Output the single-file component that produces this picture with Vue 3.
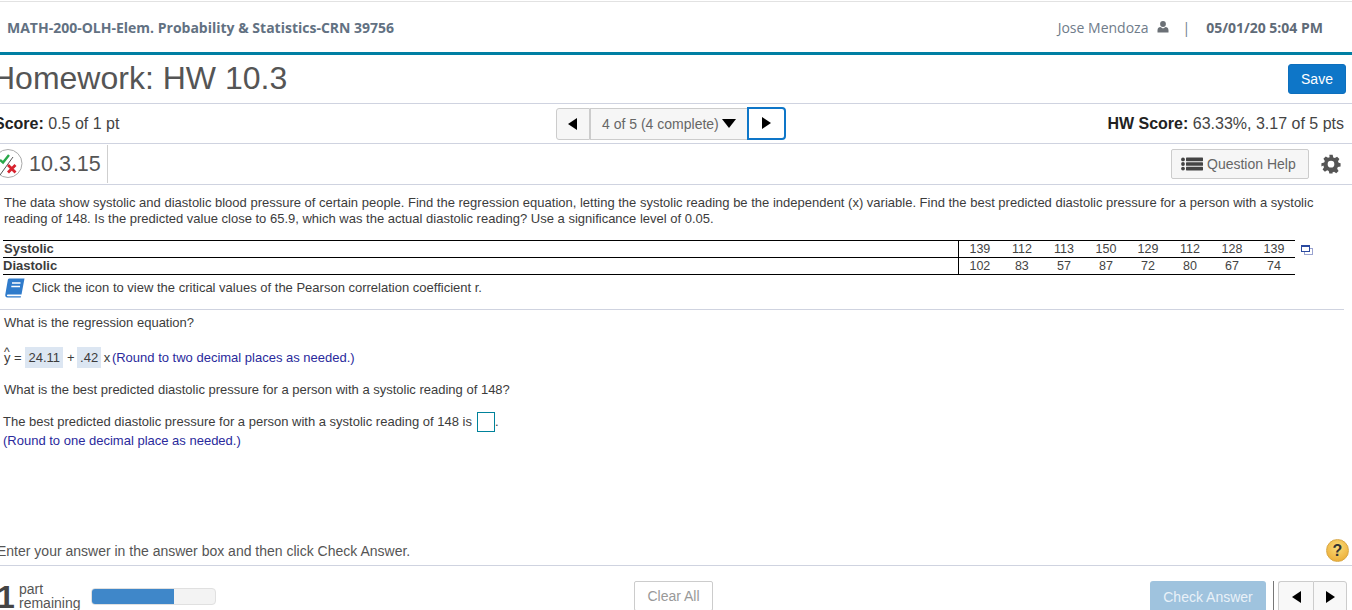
<script setup>
const systolic = [139, 112, 113, 150, 129, 112, 128, 139]
const diastolic = [102, 83, 57, 87, 72, 80, 67, 74]
</script>

<template>
  <div class="page">
    <header class="course">
      <span class="course-name">MATH-200-OLH-Elem. Probability &amp; Statistics-CRN 39756</span>
      <div class="user">
        <span>Jose Mendoza</span>
        <svg class="user-icon" viewBox="0 0 12 12" width="12" height="12">
          <circle cx="6" cy="3" r="2.9" fill="#6b7076" />
          <path d="M0.5 11.5V9.2C0.5 7.2 2 6 3.4 6L6 7.6 8.6 6C10 6 11.5 7.2 11.5 9.2V11.5Z" fill="#6b7076" />
        </svg>
        <span class="pipe">|</span>
        <strong class="stamp">05/01/20 5:04 PM</strong>
      </div>
    </header>

    <section class="title-row">
      <h1>Homework: HW 10.3</h1>
      <button class="save">Save</button>
    </section>

    <section class="score-row">
      <div class="score"><b>Score:</b> 0.5 of 1 pt</div>
      <div class="nav">
        <button class="nav-prev"><span class="tri-left"></span></button>
        <button class="nav-label">4 of 5 (4 complete)<span class="tri-down"></span></button>
        <button class="nav-next"><span class="tri-right"></span></button>
      </div>
      <div class="hw-score"><b>HW Score:</b> 63.33%, 3.17 of 5 pts</div>
    </section>

    <section class="question-row">
      <svg class="status" viewBox="0 0 24 30" width="24" height="30">
        <circle cx="8" cy="14.500" r="14" fill="#fff" stroke="#aaa" stroke-width="1" />
        <path d="M0 11L3 13.500 9 6" fill="none" stroke="#2aa84a" stroke-width="2.400" />
        <path d="M13 8L0 26" stroke="#555" stroke-width="1" />
        <path d="M8 16L15.500 23.500M15.500 16L8 23.500" stroke="#d8232f" stroke-width="2.800" />
      </svg>
      <span class="q-number">10.3.15</span>
      <span class="q-sep"></span>
      <button class="q-help">
        <svg viewBox="0 0 22 14" width="22" height="14">
          <g fill="#444">
            <circle cx="2" cy="2.4" r="1.9" /><circle cx="2" cy="7" r="1.9" /><circle cx="2" cy="11.6" r="1.9" />
            <rect x="5" y="0.6" width="17" height="3.6" rx="0.6" /><rect x="5" y="5.2" width="17" height="3.6" rx="0.6" /><rect x="5" y="9.8" width="17" height="3.6" rx="0.6" />
          </g>
        </svg>
        Question Help
      </button>
      <svg class="gear" viewBox="0 0 24 24" width="20" height="20">
        <path fill="#555" fill-rule="evenodd" d="M10 1h4l.7 3.1 1.9.8 2.7-1.7 2.8 2.8-1.7 2.7.8 1.9L23.500 11v4l-3.300.7-.8 1.900 1.700 2.700-2.800 2.800-2.700-1.700-1.900.8L14 23.500h-4l-.7-3.100-1.900-.8-2.700 1.700-2.800-2.800 1.700-2.700-.8-1.900L.5 15v-4l3.300-.7.8-1.900-1.700-2.700 2.800-2.800 2.700 1.700 1.900-.8ZM12 8.200a4 4 0 1 0 0 8 4 4 0 0 0 0-8Z" />
      </svg>
    </section>

    <main class="body">
      <p class="intro">The data show systolic and diastolic blood pressure of certain people. Find the regression equation, letting the systolic reading be the independent (x) variable. Find the best predicted diastolic pressure for a person with a systolic reading of 148. Is the predicted value close to 65.9, which was the actual diastolic reading? Use a significance level of 0.05.</p>

      <div class="table-wrap">
        <table class="data">
          <tbody>
            <tr>
              <th class="sys">Systolic</th>
              <td v-for="(v, i) in systolic" :key="i">{{ v }}</td>
            </tr>
            <tr>
              <th>Diastolic</th>
              <td v-for="(v, i) in diastolic" :key="i">{{ v }}</td>
            </tr>
          </tbody>
        </table>
        <svg class="copy" viewBox="0 0 12 10" width="12" height="10">
          <rect x="3.500" y="3.500" width="8" height="6" fill="#fff" stroke="#9aa3d0" />
          <rect x="0.500" y="0.500" width="8" height="6" fill="#fff" stroke="#2b4aa0" />
          <rect x="0.500" y="0.500" width="8" height="1.500" fill="#2b4aa0" />
        </svg>
      </div>

      <div class="book-row">
        <svg viewBox="0 0 20 20" width="20" height="20">
          <path d="M4.500 0.500H19.500L16.500 16.500H3C1.500 16.500 1.500 18.200 3 18.200H16L15.700 19.500H2.500C0.500 19.500 0 18 0.300 16.500L2.800 2C3 1 3.600 0.500 4.500 0.500Z" fill="#2f7bcb" />
          <path d="M7 5H15.500M6.300 8.500H15" stroke="#fff" stroke-width="1.400" />
        </svg>
        <span>Click the icon to view the critical values of the Pearson correlation coefficient r.</span>
      </div>

      <div class="rule"></div>

      <p class="what">What is the regression equation?</p>

      <p class="equation">
        <span class="yhat">y</span> =
        <span class="filled first">24.11</span> +
        <span class="filled second">.42</span> x
        <span class="hint eq-hint">(Round to two decimal places as needed.)</span>
      </p>

      <p class="what-2">What is the best predicted diastolic pressure for a person with a systolic reading of 148?</p>

      <p class="best">The best predicted diastolic pressure for a person with a systolic reading of 148 is<span class="answer"></span>.</p>
      <p class="hint round">(Round to one decimal place as needed.)</p>
    </main>

    <section class="enter-row">
      <span>Enter your answer in the answer box and then click Check Answer.</span>
      <span class="help-dot">?</span>
    </section>

    <footer class="foot">
      <span class="parts-num">1</span>
      <span class="parts-label">part<br />remaining</span>
      <div class="progress"><div class="progress-fill"></div></div>
      <button class="clear">Clear All</button>
      <button class="check">Check Answer</button>
      <span class="foot-sep"></span>
      <div class="foot-nav">
        <button><span class="tri-left"></span></button>
        <button><span class="tri-right"></span></button>
      </div>
    </footer>
  </div>
</template>

<style>
html, body { margin: 0; background: #fff; }
</style>

<style scoped>
.page {
  width: 1352px;
  height: 610px;
  overflow: hidden;
  display: flex;
  flex-direction: column;
  font-family: "Liberation Sans", Arial, sans-serif;
  font-size: 13px;
  color: #3c3c3c;
  background: #fff;
}
button { font-family: inherit; cursor: pointer; box-sizing: border-box; }
h1, p { margin: 0; }

.course {
  flex: none;
  box-sizing: border-box;
  height: 54px;
  margin-top: 1px;
  border-top: 1px solid #e2e2e2;
  border-bottom: 3px solid #007fa3;
  padding: 0 29px 0 7px;
  display: flex;
  align-items: center;
  justify-content: space-between;
  font-family: "Open Sans", sans-serif;
  font-size: 14px;
  color: #6c7a89;
}
.course-name { font-weight: 700; color: #627182; }
.user { display: flex; align-items: center; color: #6f7c8a; }
.user-icon { margin-left: 9px; }
.pipe { margin-left: 13px; }
.stamp { margin-left: 16px; color: #5f6b78; }

.title-row {
  flex: none;
  box-sizing: border-box;
  height: 49px;
  border-bottom: 1px solid #cfd3e0;
  padding: 0 6px 0 0;
  display: flex;
  align-items: center;
  justify-content: space-between;
}
h1 {
  margin: 0 0 2px -8px;
  font-size: 32px;
  font-weight: 400;
  color: #555;
  line-height: 46px;
}
.save {
  width: 58px;
  height: 30px;
  border: 1px solid #0d6fbd;
  border-radius: 3px;
  background: #0e76c8;
  color: #fff;
  font-size: 14px;
  padding: 0;
}

.score-row {
  flex: none;
  box-sizing: border-box;
  height: 40px;
  border-bottom: 1px solid #cfd3e0;
  padding: 0 8px 0 0;
  display: flex;
  align-items: center;
  justify-content: space-between;
  font-size: 16px;
  color: #444;
}
.score-row b { color: #222; }
.score { margin-left: -6px; }
.nav {
  display: flex;
  height: 32px;
  margin-left: 115px;
}
.nav button { height: 32px; padding: 0; background: #f6f6f6; border: 1px solid #ccc; display: flex; align-items: center; justify-content: center; }
.nav-prev { width: 34px; border-radius: 3px 0 0 3px; border-right: 0; }
.nav-label {
  width: 157px;
  font-size: 14px;
  color: #666;
  border-right: 0 !important;
}
.nav .nav-next { width: 39px; height: 33px; margin-top: -1px; border: 2px solid #0e76c8; background: #fff; border-radius: 0 4px 4px 0; }
.tri-left, .tri-right, .tri-down { display: inline-block; width: 0; height: 0; }
.tri-left { border-top: 6px solid transparent; border-bottom: 6px solid transparent; border-right: 9px solid #000; }
.tri-right { border-top: 6px solid transparent; border-bottom: 6px solid transparent; border-left: 9px solid #000; }
.tri-down { margin-left: 3px; border-left: 7px solid transparent; border-right: 7px solid transparent; border-top: 9px solid #000; }

.question-row {
  flex: none;
  box-sizing: border-box;
  height: 41px;
  border-bottom: 1px solid #cfd3e0;
  display: flex;
  align-items: center;
  padding-right: 11px;
}
.status { flex: none; }
.q-number { margin-left: 5px; font-size: 21.500px; color: #555; }
.q-sep { align-self: stretch; width: 1px; margin: 1px 0 1px 6px; background: #cfcfcf; }
.q-help {
  margin-left: auto;
  width: 138px;
  height: 30px;
  border: 1px solid #ccc;
  border-radius: 2px;
  background: #f6f6f6;
  color: #666;
  font-size: 14px;
  display: flex;
  align-items: center;
  padding: 0 0 0 9px;
  gap: 4px;
}
.gear { margin-left: 12px; }

.body { flex: 1; min-height: 0; }
.intro {
  width: 1330px;
  margin: 10px 0 0 4px;
  line-height: 16px;
}
.table-wrap { display: flex; align-items: flex-start; margin: 13px 0 0 3px; }
.data {
  width: 1292px;
  border-collapse: collapse;
  table-layout: fixed;
  font-size: 12.500px;
  border-top: 1px solid #000;
  border-bottom: 1px solid #000;
}
.data tr + tr { border-top: 1px solid #000; }
.data th {
  width: 955px;
  height: 16px;
  padding: 0;
  box-sizing: border-box;
  border-right: 1px solid #000;
  text-align: left;
  font-size: 13px;
  font-weight: 700;
  line-height: 16px;
}
.data th.sys { padding-left: 1px; }
.data td { width: 42px; padding: 0; text-align: center; line-height: 16px; color: #444; }
.copy { margin: 5px 0 0 6px; }

.book-row {
  display: flex;
  align-items: center;
  gap: 7px;
  height: 25px;
  margin-left: 5px;
}
.rule { height: 1px; width: 1344px; margin-top: 9px; background: #cfd3e0; }
.what { margin: 5px 0 0 4px; line-height: 16px; }
.equation { margin: 16px 0 0 4px; line-height: 22px; }
.yhat { position: relative; }
.yhat::before {
  content: "^";
  position: absolute;
  left: 0;
  top: -9px;
  font-size: 12px;
}
.filled { display: inline-block; background: #dce6f2; line-height: 21px; text-align: center; }
.first { width: 38px; }
.second { width: 24px; margin: 0 -1px 0 -1px; }
.hint { color: #2a2a9c; }
.eq-hint { margin-left: -2px; }
.what-2 { margin: 13px 0 0 4px; line-height: 16px; }
.best { margin: 14px 0 0 3px; line-height: 20px; display: flex; align-items: center; }
.answer { display: inline-block; box-sizing: border-box; width: 18px; height: 20px; margin-left: 5px; border: 1px solid #00829b; background: #fff; }
.round { margin: 0 0 0 3px; line-height: 18px; }

.enter-row {
  flex: none;
  box-sizing: border-box;
  height: 30px;
  border-bottom: 1px solid #cfd3e0;
  display: flex;
  align-items: center;
  justify-content: space-between;
  padding-right: 3px;
  font-size: 14px;
  color: #555;
}
.enter-row > span:first-child { margin-left: -3px; }
.help-dot {
  width: 23px;
  height: 23px;
  border-radius: 50%;
  background: radial-gradient(circle at 50% 35%, #fbdc7b, #e9a52a);
  border: 1px solid #d9a845;
  box-sizing: border-box;
  color: #333;
  font-weight: 700;
  font-size: 16px;
  line-height: 21px;
  text-align: center;
}

.foot {
  flex: none;
  height: 44px;
  display: flex;
  align-items: flex-start;
  padding-top: 15px;
  box-sizing: border-box;
  overflow: hidden;
  font-size: 14px;
  color: #555;
}
.parts-num { margin-left: -3px; font-size: 32px; font-weight: 700; line-height: 32px; color: #444; width: 22px; flex: none; }
.parts-label { line-height: 14px; margin: 1px 0 0 0; width: 72px; flex: none; }
.progress {
  width: 125px;
  height: 17px;
  margin-top: 7px;
  box-sizing: border-box;
  border: 1px solid #e0e0e0;
  border-radius: 4px;
  background: #f3f3f3;
  overflow: hidden;
  flex: none;
}
.progress-fill { width: 82px; height: 100%; background: #3f87c9; }
.clear {
  margin-left: 418px;
  width: 79px;
  height: 30px;
  border: 1px solid #ccc;
  border-radius: 2px;
  background: #fff;
  color: #999;
  font-size: 14px;
  padding: 0;
}
.check {
  margin-left: auto;
  width: 116px;
  height: 32px;
  border: 0;
  border-radius: 3px;
  background: #9fc3de;
  color: #e9f1f8;
  font-size: 14px;
  padding: 0;
}
.foot-sep { width: 1px; height: 32px; margin-left: 7px; background: #777; flex: none; }
.foot-nav { display: flex; margin: 0 5px 0 4px; }
.foot-nav button {
  width: 35px;
  height: 32px;
  padding: 0;
  border: 1px solid #ccc;
  background: #f8f8f8;
  display: flex;
  align-items: center;
  justify-content: center;
}
.foot-nav button:first-child { border-radius: 3px 0 0 3px; border-right: 0; }
.foot-nav button:last-child { width: 34px; border-radius: 0 3px 3px 0; }
</style>
